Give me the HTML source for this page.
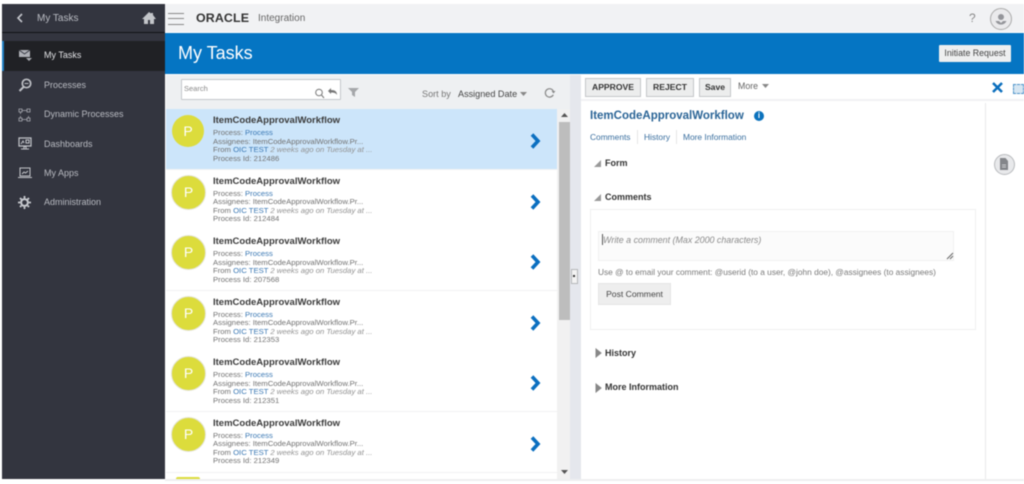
<!DOCTYPE html>
<html><head><meta charset="utf-8"><style>
html,body{margin:0;padding:0;background:#fff}
#p{position:relative;width:1024px;height:484px;overflow:hidden;background:#fff;font-family:"Liberation Sans",sans-serif;filter:blur(.45px)}
#p div,#p svg{position:absolute}
.t{white-space:nowrap;line-height:12px}
.n{color:#b9bbc2;font-size:9px;left:44px}
.it{left:166px;width:391px;height:60px;background:#fff;border-bottom:1px solid #f1f2f3}
.c{left:5px;top:5px;width:33px;height:33px;border-radius:50%;background:#dcdc3c;border:1px solid #e4e4d8;color:#fff;font-size:14px;line-height:33px;text-align:center}
.ti{left:47px;top:6px;font-size:9.5px;font-weight:bold;color:#3a3a3a;white-space:nowrap;line-height:11px}
.l{left:47px;font-size:7.7px;line-height:9px;color:#727272;white-space:nowrap}
.l b{font-weight:normal;color:#3a78b4}.l i{color:#929292}
.btn{background:#eceded;border:1px solid #c4c6c8;font-size:8.6px;font-weight:bold;color:#333;text-align:center;height:17px;line-height:17px;top:78px}
.lk{color:#3a6f9f;font-size:8.4px;top:131px;line-height:12px;white-space:nowrap}
.h{color:#333;font-size:9px;font-weight:bold;left:605px;line-height:12px;white-space:nowrap}
</style></head><body><div id="p">
<div style="left:0;top:0;width:1024px;height:4px;background:#fff"></div>
<!-- sidebar -->
<div style="left:2px;top:4px;width:163px;height:475px;background:#33353f"></div>
<div style="left:2px;top:32px;width:163px;height:1px;background:#111216"></div>
<div style="left:2px;top:41px;width:163px;height:30px;background:#202125"></div>
<div style="left:2px;top:41px;width:2px;height:30px;background:#1f7fc4"></div>
<svg style="left:15px;top:12px" width="10" height="12" viewBox="0 0 10 12"><path d="M7 2L3 6l4 4" fill="none" stroke="#c3c5cb" stroke-width="1.600"/></svg>
<div class="t" style="left:37px;top:13px;color:#b9bbc2;font-size:10px">My Tasks</div>
<svg style="left:142px;top:11px" width="14" height="14" viewBox="0 0 14 14"><path d="M7 1L0 8h2v5h4V9h2v4h4V8h2L11 4V2H9v.5z" fill="#c3c5c9"/></svg>
<svg style="left:18px;top:49px" width="14" height="13" viewBox="0 0 14 13"><path d="M1 1h11v7H1z" fill="#aeb0b6"/><path d="M1 1l5.500 4L12 1" fill="none" stroke="#33353f" stroke-width=".9"/><path d="M8 9h6l-3 3z" fill="#aeb0b6"/></svg>
<div class="t n" style="top:49px;color:#e0e1e4">My Tasks</div>
<svg style="left:18px;top:78px" width="14" height="14" viewBox="0 0 14 14"><circle cx="8.500" cy="5.500" r="4.200" fill="none" stroke="#bfc1c6" stroke-width="1.700"/><path d="M5.500 9L1.500 13" stroke="#bfc1c6" stroke-width="2"/><path d="M6.500 5.500h4" stroke="#bfc1c6"/></svg>
<div class="t n" style="top:79px">Processes</div>
<svg style="left:18px;top:108px" width="13" height="14" viewBox="0 0 13 14"><path d="M1 1h3v3H1zM9 1h3v3H9zM1 10h3v3H1zM9 10h3v3H9zM4 2.500h5M2.500 4v2M2.500 8v2M4 11.500h5M10.500 8v2" fill="none" stroke="#a9abb2" stroke-width=".8"/></svg>
<div class="t n" style="top:108px">Dynamic Processes</div>
<svg style="left:18px;top:137px" width="14" height="14" viewBox="0 0 14 14"><path d="M1 1h12v8H1z" fill="none" stroke="#c3c5ca" stroke-width="1.200"/><path d="M3 7l2-3 1 2M8 3h3v3H8zM3 12h8M6 9.500h2V12H6z" fill="none" stroke="#c3c5ca"/></svg>
<div class="t n" style="top:138px">Dashboards</div>
<svg style="left:18px;top:167px" width="14" height="12" viewBox="0 0 14 12"><path d="M2 1h10v8H2z" fill="none" stroke="#c3c5ca"/><path d="M4 7l2-2 1.500 1L10 4M0 10.500h14" fill="none" stroke="#c3c5ca"/></svg>
<div class="t n" style="top:167px">My Apps</div>
<svg style="left:18px;top:196px" width="13" height="13" viewBox="0 0 13 13"><circle cx="6.500" cy="6.500" r="3.400" fill="none" stroke="#c9cbd0" stroke-width="2"/><path d="M6.500 0v13M0 6.500h13M2 2l9 9M11 2l-9 9" stroke="#c9cbd0" stroke-width="1.800" stroke-dasharray="2.200 8.600 2.200"/></svg>
<div class="t n" style="top:196px">Administration</div>
<!-- top bar -->
<div style="left:165px;top:4px;width:859px;height:28px;background:#f1f2f4"></div>
<div style="left:168px;top:13px;width:16px;height:10px;border-top:1px solid #888;border-bottom:1px solid #888"></div>
<div style="left:168px;top:18px;width:16px;height:1px;background:#888"></div>
<div class="t" style="left:196px;top:13px;font-size:11.500px;font-weight:bold;color:#333;letter-spacing:.1px;transform-origin:left;transform:scaleX(1.080)">ORACLE</div>
<div class="t" style="left:258px;top:13px;font-size:10px;color:#666">Integration</div>
<div class="t" style="left:969px;top:12px;font-size:12px;color:#888">?</div>
<div style="left:990px;top:8px;width:20px;height:20px;border-radius:50%;background:#eaeaec;border:1px solid #aaa"></div>
<svg style="left:994px;top:12px" width="14" height="14" viewBox="0 0 14 14"><circle cx="7" cy="5" r="3" fill="#94959a"/><path d="M1.500 9h3.500l2 2 2-2h3.500a6 6 0 01-11 0z" fill="#94959a"/></svg>
<!-- blue band -->
<div style="left:165px;top:33px;width:859px;height:41px;background:#0575c3"></div>
<div class="t" style="left:178px;top:43px;font-size:18px;line-height:20px;color:#fff">My Tasks</div>
<div style="left:939px;top:45px;width:72px;height:17px;background:#eeeff0;color:#444;font-size:8.800px;line-height:17px;text-align:center;border-radius:1px">Initiate Request</div>
<!-- list toolbar -->
<div style="left:166px;top:75px;width:405px;height:34px;background:#eef0f2"></div>
<div style="left:181px;top:79px;width:158px;height:19px;background:#fff;border:1px solid #c4c7cb;border-radius:1px"></div>
<div class="t" style="left:184px;top:83px;font-size:7.500px;color:#888">Search</div>
<svg style="left:314px;top:88px" width="12" height="11" viewBox="0 0 12 11"><circle cx="5" cy="4.500" r="3.300" fill="none" stroke="#777"/><path d="M7.500 7l2.500 3" stroke="#777"/></svg>
<svg style="left:327px;top:87px" width="12" height="10" viewBox="0 0 12 10"><path d="M1 4l3-3v2c4 0 6 1.500 6 5-1-2-3-2.500-6-2.500V7z" fill="#777"/></svg>
<svg style="left:348px;top:87px" width="11" height="11" viewBox="0 0 11 11"><path d="M0 1h11L7 5v5L4 8V5z" fill="#a5a7aa"/></svg>
<div class="t" style="left:422px;top:88px;font-size:9.100px;color:#777">Sort by</div>
<div class="t" style="left:458px;top:88px;font-size:9.100px;color:#444">Assigned Date</div>
<svg style="left:520px;top:92px" width="7" height="5" viewBox="0 0 7 5"><path d="M0 0h7L3.500 4z" fill="#888"/></svg>
<svg style="left:544px;top:87px" width="12" height="11" viewBox="0 0 12 11"><path d="M9.300 4A4.200 4.200 0 1 0 9.300 7.800" fill="none" stroke="#888" stroke-width="1.200"/><path d="M7.500 4h4L9.500 6.500z" fill="#888"/></svg>
<!-- list -->
<div class="it" style="top:109px;background:#cce5fa"><div class="c" style="left:6px;top:6px;width:32px;height:32px;line-height:32px;border:0">P</div><div class="ti">ItemCodeApprovalWorkflow</div><div class="l" style="top:19px">Process: <b>Process</b></div><div class="l" style="top:27.500px">Assignees: ItemCodeApprovalWorkflow.Pr...</div><div class="l" style="top:36px">From <b>OIC TEST</b> <i>2 weeks ago on Tuesday at ...</i></div><div class="l" style="top:44.500px">Process Id: 212486</div><svg style="left:364px;top:24px" width="11" height="16" viewBox="0 0 11 16"><path d="M2 1.500L8 8l-6 6.500" fill="none" stroke="#0b6fc0" stroke-width="3.600"/></svg></div>
<div class="it" style="top:169.500px"><div class="c">P</div><div class="ti">ItemCodeApprovalWorkflow</div><div class="l" style="top:19px">Process: <b>Process</b></div><div class="l" style="top:27.500px">Assignees: ItemCodeApprovalWorkflow.Pr...</div><div class="l" style="top:36px">From <b>OIC TEST</b> <i>2 weeks ago on Tuesday at ...</i></div><div class="l" style="top:44.500px">Process Id: 212484</div><svg style="left:364px;top:24px" width="11" height="16" viewBox="0 0 11 16"><path d="M2 1.500L8 8l-6 6.500" fill="none" stroke="#0b6fc0" stroke-width="3.600"/></svg></div>
<div class="it" style="top:230px"><div class="c">P</div><div class="ti">ItemCodeApprovalWorkflow</div><div class="l" style="top:19px">Process: <b>Process</b></div><div class="l" style="top:27.500px">Assignees: ItemCodeApprovalWorkflow.Pr...</div><div class="l" style="top:36px">From <b>OIC TEST</b> <i>2 weeks ago on Tuesday at ...</i></div><div class="l" style="top:44.500px">Process Id: 207568</div><svg style="left:364px;top:24px" width="11" height="16" viewBox="0 0 11 16"><path d="M2 1.500L8 8l-6 6.500" fill="none" stroke="#0b6fc0" stroke-width="3.600"/></svg></div>
<div class="it" style="top:290.500px"><div class="c">P</div><div class="ti">ItemCodeApprovalWorkflow</div><div class="l" style="top:19px">Process: <b>Process</b></div><div class="l" style="top:27.500px">Assignees: ItemCodeApprovalWorkflow.Pr...</div><div class="l" style="top:36px">From <b>OIC TEST</b> <i>2 weeks ago on Tuesday at ...</i></div><div class="l" style="top:44.500px">Process Id: 212353</div><svg style="left:364px;top:24px" width="11" height="16" viewBox="0 0 11 16"><path d="M2 1.500L8 8l-6 6.500" fill="none" stroke="#0b6fc0" stroke-width="3.600"/></svg></div>
<div class="it" style="top:351px"><div class="c">P</div><div class="ti">ItemCodeApprovalWorkflow</div><div class="l" style="top:19px">Process: <b>Process</b></div><div class="l" style="top:27.500px">Assignees: ItemCodeApprovalWorkflow.Pr...</div><div class="l" style="top:36px">From <b>OIC TEST</b> <i>2 weeks ago on Tuesday at ...</i></div><div class="l" style="top:44.500px">Process Id: 212351</div><svg style="left:364px;top:24px" width="11" height="16" viewBox="0 0 11 16"><path d="M2 1.500L8 8l-6 6.500" fill="none" stroke="#0b6fc0" stroke-width="3.600"/></svg></div>
<div class="it" style="top:411.500px"><div class="c">P</div><div class="ti">ItemCodeApprovalWorkflow</div><div class="l" style="top:19px">Process: <b>Process</b></div><div class="l" style="top:27.500px">Assignees: ItemCodeApprovalWorkflow.Pr...</div><div class="l" style="top:36px">From <b>OIC TEST</b> <i>2 weeks ago on Tuesday at ...</i></div><div class="l" style="top:44.500px">Process Id: 212349</div><svg style="left:364px;top:24px" width="11" height="16" viewBox="0 0 11 16"><path d="M2 1.500L8 8l-6 6.500" fill="none" stroke="#0b6fc0" stroke-width="3.600"/></svg></div>
<div style="left:176px;top:477px;width:24px;height:2px;background:#dcdc3c;border-radius:12px 12px 0 0"></div>
<!-- scrollbar -->
<div style="left:557px;top:109px;width:13px;height:370px;background:#f1f1f1"></div>
<div style="left:559px;top:122px;width:11px;height:198px;background:#bdbdbd"></div>
<svg style="left:561px;top:113px" width="7" height="5" viewBox="0 0 7 5"><path d="M0 4h7L3.500 0z" fill="#555"/></svg>
<svg style="left:561px;top:470px" width="7" height="5" viewBox="0 0 7 5"><path d="M0 0h7L3.500 4z" fill="#555"/></svg>
<!-- splitter -->
<div style="left:570px;top:75px;width:11px;height:404px;background:#e5e7ed"></div>
<div style="left:571px;top:269px;width:5px;height:13px;background:#f3f3f3;border:1px solid #b5b7ba"></div>
<div style="left:573px;top:275px;width:2px;height:2px;background:#333"></div>
<!-- detail toolbar -->
<div style="left:581px;top:99px;width:443px;height:2px;background:#f1f2f3"></div>
<div class="btn" style="left:585px;width:54px">APPROVE</div>
<div class="btn" style="left:646px;width:46px">REJECT</div>
<div class="btn" style="left:699px;width:30px">Save</div>
<div class="t" style="left:738px;top:80px;font-size:8.800px;color:#666">More</div>
<svg style="left:762px;top:84px" width="7" height="5" viewBox="0 0 7 5"><path d="M0 0h7L3.500 4z" fill="#888"/></svg>
<svg style="left:992px;top:82px" width="11" height="11" viewBox="0 0 11 11"><path d="M1 1l9 9M10 1l-9 9" stroke="#0a6ebd" stroke-width="2.500"/></svg>
<div style="left:1013px;top:84px;width:9px;height:8px;border:1px dashed #4d93c9;background:#d6e6f2"></div>
<!-- detail -->
<div class="t" style="left:590px;top:109px;font-size:11.500px;line-height:14px;font-weight:bold;color:#2a6496">ItemCodeApprovalWorkflow</div>
<div style="left:754px;top:111px;width:10px;height:10px;border-radius:50%;background:#0b72bd;color:#fff;font-size:8px;line-height:10px;text-align:center;font-weight:bold">i</div>
<div class="lk" style="left:590px">Comments</div>
<div style="left:637px;top:130px;width:1px;height:14px;background:#e6e6e6"></div>
<div class="lk" style="left:644px">History</div>
<div style="left:676px;top:130px;width:1px;height:14px;background:#e6e6e6"></div>
<div class="lk" style="left:683px">More Information</div>
<svg style="left:594px;top:160px" width="8" height="8" viewBox="0 0 8 8"><path d="M7 0v7H0z" fill="#999"/></svg>
<div class="h" style="top:157px">Form</div>
<svg style="left:594px;top:194px" width="8" height="8" viewBox="0 0 8 8"><path d="M7 0v7H0z" fill="#999"/></svg>
<div class="h" style="top:191px">Comments</div>
<div style="left:590px;top:209px;width:384px;height:119px;border:1px solid #eff0f0;background:#fff"></div>
<div style="left:598px;top:231px;width:354px;height:28px;border:1px solid #f1f1f1;background:#fbfbfb"></div>
<div style="left:602px;top:234px;width:1px;height:11px;background:#555"></div>
<div class="t" style="left:603px;top:234px;font-size:8.900px;font-style:italic;color:#8a8a8a">Write a comment (Max 2000 characters)</div>
<svg style="left:946px;top:252px" width="8" height="8" viewBox="0 0 8 8"><path d="M1 7l6-6M4 7l3-3" stroke="#666"/></svg>
<div class="t" style="left:598px;top:266px;font-size:8.330px;color:#7a7a7a">Use @ to email your comment: @userid (to a user, @john doe), @assignees (to assignees)</div>
<div style="left:598px;top:283px;width:71px;height:20px;background:#eeeeee;border:1px solid #e4e4e4;color:#444;font-size:8.600px;line-height:20px;text-align:center">Post Comment</div>
<svg style="left:595px;top:348px" width="7" height="10" viewBox="0 0 7 10"><path d="M1 1l5 4-5 4z" fill="#888" stroke="#888"/></svg>
<div class="h" style="top:347px">History</div>
<svg style="left:595px;top:383px" width="7" height="10" viewBox="0 0 7 10"><path d="M1 1l5 4-5 4z" fill="#888" stroke="#888"/></svg>
<div class="h" style="top:381px">More Information</div>
<div style="left:985px;top:103px;width:1px;height:376px;background:#e8e9ea"></div>
<div style="left:994px;top:154px;width:19px;height:19px;border-radius:50%;background:#e8e9eb;border:1px solid #b8babd"></div>
<svg style="left:999px;top:158px" width="10" height="12" viewBox="0 0 10 12"><path d="M1 0h5.500L9 3v9H1z" fill="#84868a"/><path d="M3 7h4M3 9h4" stroke="#e8e9eb" stroke-width=".8"/></svg>
<div style="left:165px;top:479px;width:859px;height:2px;background:#eeeff0"></div>
</div></body></html>
